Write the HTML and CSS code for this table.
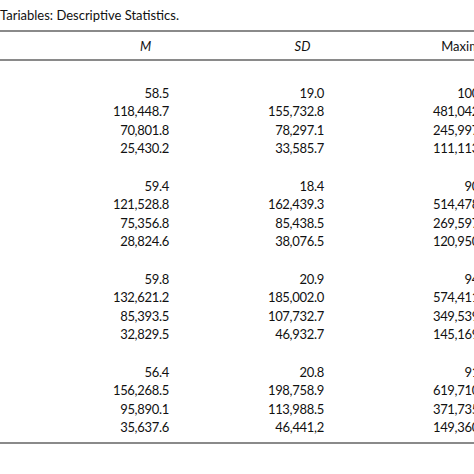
FILE: index.html
```html
<!DOCTYPE html>
<html>
<head>
<meta charset="utf-8">
<link rel="stylesheet" href="styles.css">
</head>
<body>
<div class="page">
  <div class="caption">Tariables: Descriptive Statistics.</div>
  <table class="stats">
    <colgroup>
      <col class="c-label"><col class="c-m"><col class="c-sd"><col class="c-max">
    </colgroup>
    <thead>
      <tr><th></th><th><i>M</i></th><th><i>SD</i></th><th class="h-max">Maximum</th></tr>
    </thead>
    <tbody>
      <tr class="lead"><td></td><td></td><td></td><td></td></tr>
      <tr><td></td><td>58.5</td><td>19.0</td><td>100.0</td></tr>
      <tr><td></td><td>118,448.7</td><td>155,732.8</td><td>481,042.0</td></tr>
      <tr><td></td><td>70,801.8</td><td>78,297.1</td><td>245,997.0</td></tr>
      <tr><td></td><td>25,430.2</td><td>33,585.7</td><td>111,113.0</td></tr>
      <tr class="gap"><td></td><td></td><td></td><td></td></tr>
      <tr><td></td><td>59.4</td><td>18.4</td><td>90.0</td></tr>
      <tr><td></td><td>121,528.8</td><td>162,439.3</td><td>514,478.0</td></tr>
      <tr><td></td><td>75,356.8</td><td>85,438.5</td><td>269,597.0</td></tr>
      <tr><td></td><td>28,824.6</td><td>38,076.5</td><td>120,950.0</td></tr>
      <tr class="gap"><td></td><td></td><td></td><td></td></tr>
      <tr><td></td><td>59.8</td><td>20.9</td><td>94.0</td></tr>
      <tr><td></td><td>132,621.2</td><td>185,002.0</td><td>574,411.0</td></tr>
      <tr><td></td><td>85,393.5</td><td>107,732.7</td><td>349,539.0</td></tr>
      <tr><td></td><td>32,829.5</td><td>46,932.7</td><td>145,169.0</td></tr>
      <tr class="gap"><td></td><td></td><td></td><td></td></tr>
      <tr><td></td><td>56.4</td><td>20.8</td><td>91.0</td></tr>
      <tr><td></td><td>156,268.5</td><td>198,758.9</td><td>619,710.0</td></tr>
      <tr><td></td><td>95,890.1</td><td>113,988.5</td><td>371,735.0</td></tr>
      <tr><td></td><td>35,637.6</td><td>46,441,2</td><td>149,360.0</td></tr>
      <tr class="tail"><td></td><td></td><td></td><td></td></tr>
    </tbody>
  </table>
</div>
</body>
</html>
```

FILE: styles.css
```css
html, body {
  margin: 0;
  padding: 0;
  background: #ffffff;
  overflow: hidden;
}

.page {
  width: 474px;
  height: 474px;
  overflow: hidden;
  font-family: Lato, "Open Sans", sans-serif;
  font-size: 13px;
  color: #111111;
}

.caption {
  height: 30px;
  line-height: 30px;
  white-space: nowrap;
  font-size: 13px;
}

.stats {
  border-collapse: collapse;
  table-layout: fixed;
  width: 545px;
}

.c-label { width: 66px; }
.c-m { width: 159px; }
.c-sd { width: 155px; }
.c-max { width: 165px; }

.stats th {
  height: 27px;
  padding: 0;
  font-weight: normal;
  text-align: center;
  white-space: nowrap;
  border-top: 2px solid #8a8a8a;
  border-bottom: 2px solid #8a8a8a;
}

.stats th.h-max {
  padding-left: 14px;
}

.stats td {
  height: 18.6px;
  padding: 0 56px 0 0;
  line-height: 18.6px;
  text-align: right;
  white-space: nowrap;
  letter-spacing: -0.3px;
}

.stats tr.lead td { height: 22.7px; }
.stats tr.gap td { height: 18.6px; }
.stats tr.tail td {
  height: 5px;
  border-bottom: 2px solid #8a8a8a;
}
```
